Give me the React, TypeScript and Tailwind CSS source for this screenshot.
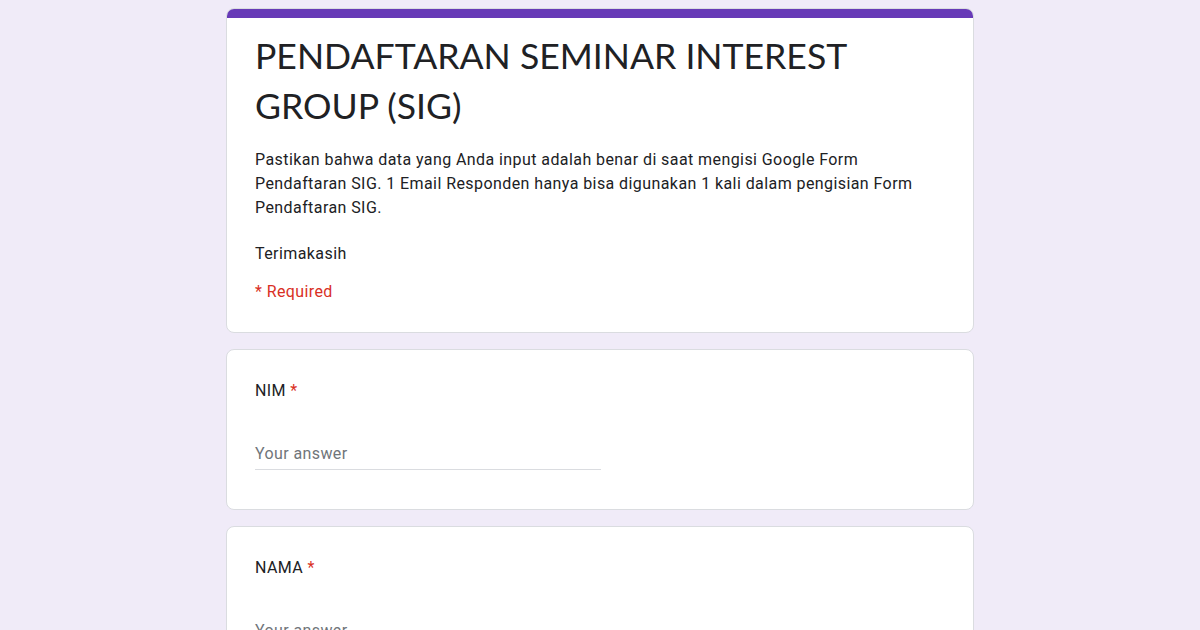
export default function App() {
  const questions = ["NIM", "NAMA"];
  return (
    <div className="min-h-[630px] w-full bg-[#f0ebf8] pt-2 font-['Roboto',sans-serif] text-[#202124]">
      <div className="mx-auto flex w-[748px] flex-col gap-4">
        <div className="overflow-hidden rounded-lg border border-[#dadce0] bg-white">
          <div className="-mx-px -mt-px h-[10px] bg-[#673ab7]" />
          <div className="pl-[28px] pr-[30px] pb-[28px] pt-[13px]">
            <h1 className="font-['Lato',sans-serif] text-[35.6px] leading-[50px] font-normal">
              PENDAFTARAN SEMINAR INTEREST GROUP (SIG)
            </h1>
            <p className="mt-[17px] text-[16px] leading-6 tracking-[0.42px]">
              Pastikan bahwa data yang Anda input adalah benar di saat mengisi Google Form Pendaftaran SIG. 1 Email
              Responden hanya bisa digunakan 1 kali dalam pengisian Form Pendaftaran SIG.
            </p>
            <p className="mt-[22px] text-[16px] leading-6 tracking-[0.42px]">Terimakasih</p>
            <p className="mt-[14px] text-[16px] leading-6 tracking-[0.4px] text-[#d93025]">* Required</p>
          </div>
        </div>
        {questions.map((q) => (
          <div key={q} className="rounded-lg border border-[#dadce0] bg-white px-[28px] pt-[29px] pb-[39px]">
            <div className="text-[16px] leading-6 tracking-[0.4px]">
              {q} <span className="text-[#d93025]">*</span>
            </div>
            <div className="mt-[39px] w-[346px] border-b border-[#dadce0] pb-[3px] text-[16px] leading-6 tracking-[0.4px] text-[#70757a]">
              Your answer
            </div>
          </div>
        ))}
      </div>
    </div>
  );
}
